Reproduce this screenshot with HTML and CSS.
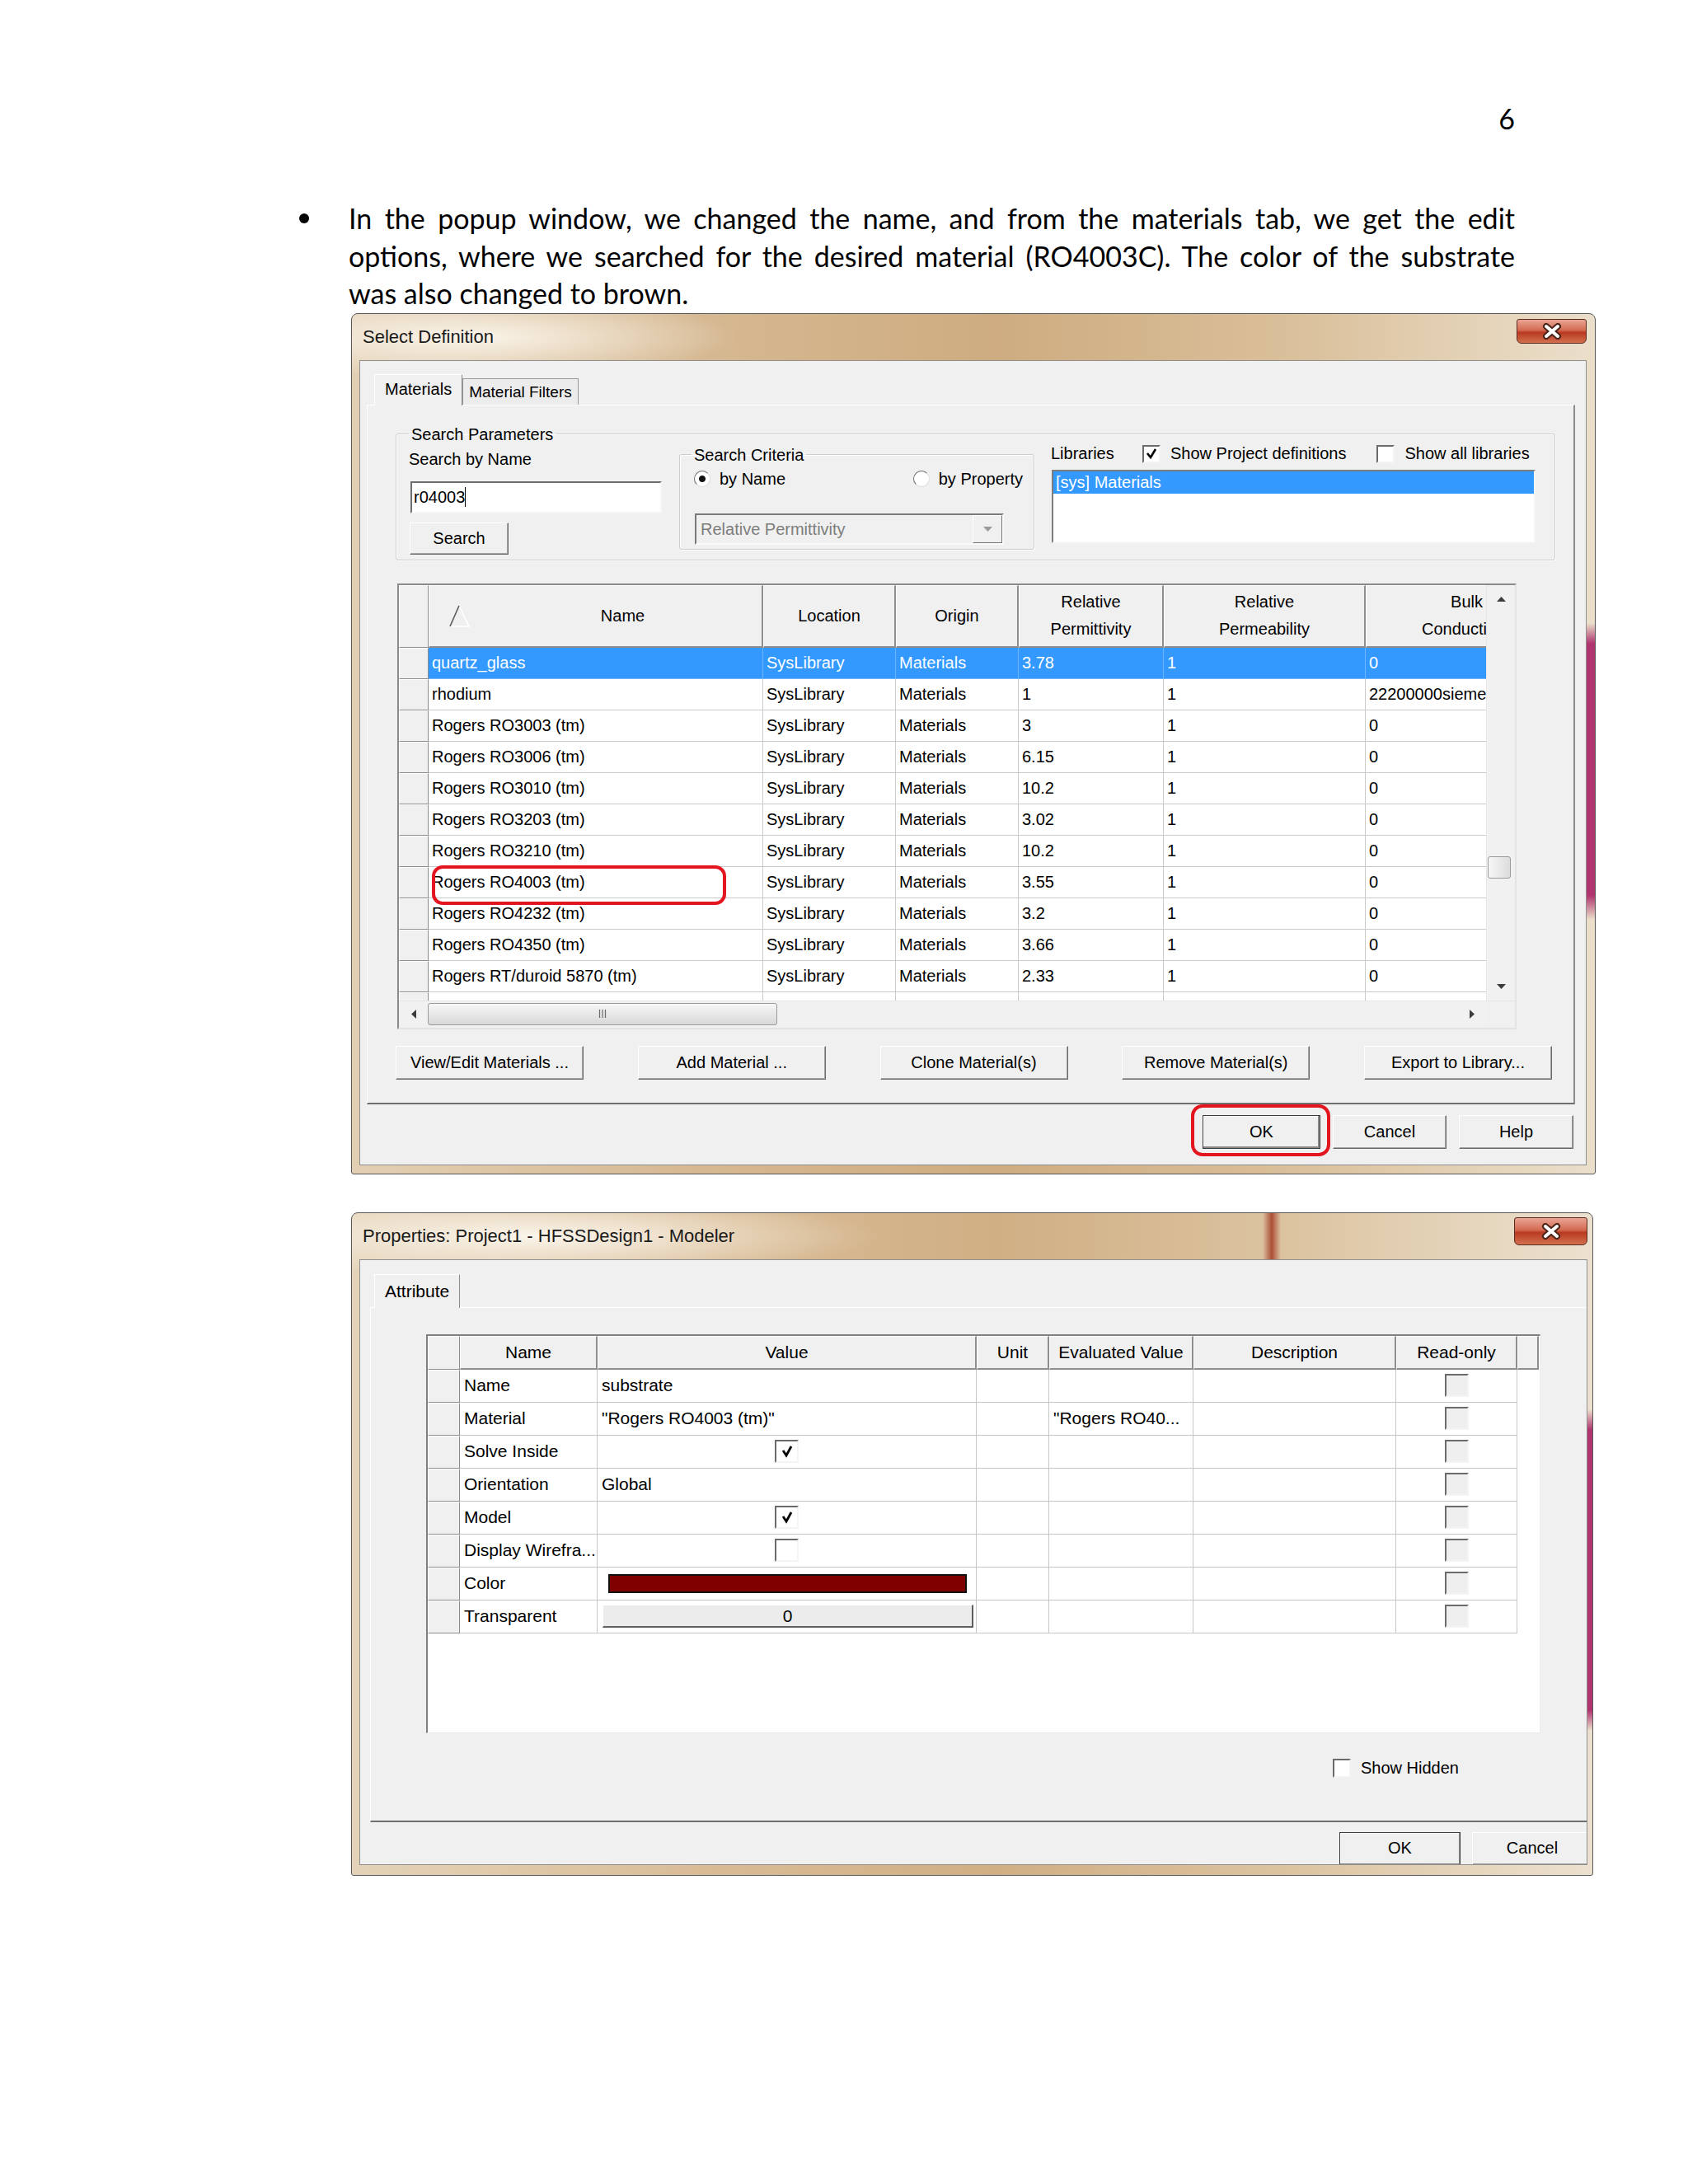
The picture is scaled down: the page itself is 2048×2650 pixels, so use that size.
FILE: index.html
```html
<!DOCTYPE html>
<html lang="en">
<head>
    <meta charset="UTF-8">
    <meta name="viewport" content="width=device-width, initial-scale=1.0">
    <title>Select Definition</title>
    <link rel="stylesheet" href="styles.css">
</head>
<body>
<div class="page">
    <div class="pagenum">6</div>
    <div class="para">
        <div class="bullet"><i></i></div>
        <div class="para-text">
            <span>In the popup window, we changed the name, and from the materials tab, we get the edit</span>
            <span>options, where we searched for the desired material (RO4003C). The color of the substrate</span>
            <span class="last">was also changed to brown.</span>
        </div>
    </div>

    <!-- select definition dialog -->
    <div class="win win-def">
        <div class="titlebar">
            <span class="title">Select Definition</span>
            <a href="javascript:;" class="closebtn">
                <svg width="28" height="20" viewBox="0 0 28 20"><path d="M7 4 L21 16 M21 4 L7 16" stroke="#4a2418" stroke-width="8" stroke-linecap="round"/><path d="M7 4 L21 16 M21 4 L7 16" stroke="#fff" stroke-width="4" stroke-linecap="round"/></svg>
            </a>
        </div>
        <div class="client">
            <div class="tabs">
                <span class="tab active">Materials</span>
                <span class="tab">Material Filters</span>
            </div>
            <div class="tabbody">
                <fieldset class="group params">
                    <legend>Search Parameters</legend>
                    <div class="params-row">
                        <div class="byname">
                            <div class="lbl">Search by Name</div>
                            <div class="edit">r04003<span class="caret"></span></div>
                            <a href="javascript:;" class="btn btn-search">Search</a>
                        </div>
                        <fieldset class="group criteria">
                            <legend>Search Criteria</legend>
                            <div class="radios">
                                <label><span class="radio on"></span>by Name</label>
                                <label><span class="radio"></span>by Property</label>
                            </div>
                            <div class="combo">
                                <span class="combo-txt">Relative Permittivity</span>
                                <span class="combo-btn"><svg width="11" height="6" viewBox="0 0 11 6"><path d="M0 0 L11 0 L5.5 6Z" fill="#9a9a9a"/></svg></span>
                            </div>
                        </fieldset>
                        <div class="libs">
                            <div class="libs-head">
                                <span class="libs-lbl">Libraries</span>
                                <label><span class="chk"><svg width="18" height="18" viewBox="0 0 18 18"><path d="M4 8 L8 13 L14 3" stroke="#000" stroke-width="2.6" fill="none"/></svg></span>Show Project definitions</label>
                                <label class="all"><span class="chk"></span>Show all libraries</label>
                            </div>
                            <div class="listbox"><div class="list-sel">[sys] Materials</div></div>
                        </div>
                    </div>
                </fieldset>

                <div class="grid">
                    <div class="grid-main">
                        <div class="grid-view">
                            <div class="mrow head">
                                <span class="rh"></span>
                                <span class="h-name"><svg class="sort" width="30" height="30" viewBox="0 0 30 30"><path d="M14 3 L26 28 L3 28" stroke="#fff" stroke-width="1.6" fill="none"/><path d="M3 28 L14 3" stroke="#5a5a5a" stroke-width="1.6" fill="none"/></svg><b>Name</b></span>
                                <span><b>Location</b></span>
                                <span><b>Origin</b></span>
                                <span><b>Relative<br>Permittivity</b></span>
                                <span><b>Relative<br>Permeability</b></span>
                                <span><b>Bulk<br>Conductivity</b></span>
                            </div>
                            <div class="mrow sel"><span class="rh"></span><span>quartz_glass</span><span>SysLibrary</span><span>Materials</span><span>3.78</span><span>1</span><span>0</span></div>
                            <div class="mrow"><span class="rh"></span><span>rhodium</span><span>SysLibrary</span><span>Materials</span><span>1</span><span>1</span><span>22200000siemens/m</span></div>
                            <div class="mrow"><span class="rh"></span><span>Rogers RO3003 (tm)</span><span>SysLibrary</span><span>Materials</span><span>3</span><span>1</span><span>0</span></div>
                            <div class="mrow"><span class="rh"></span><span>Rogers RO3006 (tm)</span><span>SysLibrary</span><span>Materials</span><span>6.15</span><span>1</span><span>0</span></div>
                            <div class="mrow"><span class="rh"></span><span>Rogers RO3010 (tm)</span><span>SysLibrary</span><span>Materials</span><span>10.2</span><span>1</span><span>0</span></div>
                            <div class="mrow"><span class="rh"></span><span>Rogers RO3203 (tm)</span><span>SysLibrary</span><span>Materials</span><span>3.02</span><span>1</span><span>0</span></div>
                            <div class="mrow"><span class="rh"></span><span>Rogers RO3210 (tm)</span><span>SysLibrary</span><span>Materials</span><span>10.2</span><span>1</span><span>0</span></div>
                            <div class="mrow"><span class="rh"></span><span class="mark">Rogers RO4003 (tm)</span><span>SysLibrary</span><span>Materials</span><span>3.55</span><span>1</span><span>0</span></div>
                            <div class="mrow"><span class="rh"></span><span>Rogers RO4232 (tm)</span><span>SysLibrary</span><span>Materials</span><span>3.2</span><span>1</span><span>0</span></div>
                            <div class="mrow"><span class="rh"></span><span>Rogers RO4350 (tm)</span><span>SysLibrary</span><span>Materials</span><span>3.66</span><span>1</span><span>0</span></div>
                            <div class="mrow"><span class="rh"></span><span>Rogers RT/duroid 5870 (tm)</span><span>SysLibrary</span><span>Materials</span><span>2.33</span><span>1</span><span>0</span></div>
                            <div class="mrow"><span class="rh"></span><span></span><span></span><span></span><span></span><span></span><span></span></div>
                        </div>
                        <div class="vscroll">
                            <span class="sb-btn"><svg width="11" height="6" viewBox="0 0 11 6"><path d="M0 6 L5.5 0 L11 6Z" fill="#3c3c3c"/></svg></span>
                            <span class="sb-track"><i class="vthumb"></i></span>
                            <span class="sb-btn"><svg width="11" height="6" viewBox="0 0 11 6"><path d="M0 0 L11 0 L5.5 6Z" fill="#3c3c3c"/></svg></span>
                        </div>
                    </div>
                    <div class="hscroll">
                        <span class="sb-btn hb"><svg width="6" height="11" viewBox="0 0 6 11"><path d="M6 0 L6 11 L0 5.5Z" fill="#3c3c3c"/></svg></span>
                        <span class="hthumb"><svg width="10" height="10" viewBox="0 0 10 10"><path d="M1.5 0V10M5 0V10M8.5 0V10" stroke="#6a6a6a" stroke-width="1.2"/></svg></span>
                        <span class="sb-gap"></span>
                        <span class="sb-btn hb"><svg width="6" height="11" viewBox="0 0 6 11"><path d="M0 0 L0 11 L6 5.5Z" fill="#3c3c3c"/></svg></span>
                        <span class="sb-corner"></span>
                    </div>
                </div>

                <div class="actions">
                    <a href="javascript:;" class="btn">View/Edit Materials ...</a>
                    <a href="javascript:;" class="btn">Add Material ...</a>
                    <a href="javascript:;" class="btn">Clone Material(s)</a>
                    <a href="javascript:;" class="btn">Remove Material(s)</a>
                    <a href="javascript:;" class="btn">Export to Library...</a>
                </div>
            </div>
            <div class="dlg-btns">
                <a href="javascript:;" class="btn btn-ok marked">OK</a>
                <a href="javascript:;" class="btn btn-cancel">Cancel</a>
                <a href="javascript:;" class="btn btn-help">Help</a>
            </div>
        </div>
    </div>

    <!-- properties dialog -->
    <div class="win win-props">
        <div class="titlebar">
            <span class="title">Properties: Project1 - HFSSDesign1 - Modeler</span>
            <a href="javascript:;" class="closebtn">
                <svg width="28" height="20" viewBox="0 0 28 20"><path d="M7 4 L21 16 M21 4 L7 16" stroke="#4a2418" stroke-width="8" stroke-linecap="round"/><path d="M7 4 L21 16 M21 4 L7 16" stroke="#fff" stroke-width="4" stroke-linecap="round"/></svg>
            </a>
        </div>
        <div class="client">
            <div class="tabs">
                <span class="tab active">Attribute</span>
            </div>
            <div class="tabbody">
                <div class="ptable">
                    <div class="prow phead">
                        <span class="rh"></span><span>Name</span><span>Value</span><span>Unit</span><span>Evaluated Value</span><span>Description</span><span>Read-only</span><span></span>
                    </div>
                    <div class="prow"><span class="rh"></span><span>Name</span><span>substrate</span><span></span><span></span><span></span><span class="ctr"><span class="chk ro"></span></span><span class="fill"></span></div>
                    <div class="prow"><span class="rh"></span><span>Material</span><span>"Rogers RO4003 (tm)"</span><span></span><span>"Rogers RO40...</span><span></span><span class="ctr"><span class="chk ro"></span></span><span class="fill"></span></div>
                    <div class="prow"><span class="rh"></span><span>Solve Inside</span><span class="ctr"><span class="chk big"><svg width="20" height="20" viewBox="0 0 20 20"><path d="M5 9 L9 15 L15 4" stroke="#000" stroke-width="2.8" fill="none"/></svg></span></span><span></span><span></span><span></span><span class="ctr"><span class="chk ro"></span></span><span class="fill"></span></div>
                    <div class="prow"><span class="rh"></span><span>Orientation</span><span>Global</span><span></span><span></span><span></span><span class="ctr"><span class="chk ro"></span></span><span class="fill"></span></div>
                    <div class="prow"><span class="rh"></span><span>Model</span><span class="ctr"><span class="chk big"><svg width="20" height="20" viewBox="0 0 20 20"><path d="M5 9 L9 15 L15 4" stroke="#000" stroke-width="2.8" fill="none"/></svg></span></span><span></span><span></span><span></span><span class="ctr"><span class="chk ro"></span></span><span class="fill"></span></div>
                    <div class="prow"><span class="rh"></span><span>Display Wirefra...</span><span class="ctr"><span class="chk big"></span></span><span></span><span></span><span></span><span class="ctr"><span class="chk ro"></span></span><span class="fill"></span></div>
                    <div class="prow"><span class="rh"></span><span>Color</span><span class="colorcell"><i class="swatch"></i></span><span></span><span></span><span></span><span class="ctr"><span class="chk ro"></span></span><span class="fill"></span></div>
                    <div class="prow"><span class="rh"></span><span>Transparent</span><span class="slidecell"><i class="slider">0</i></span><span></span><span></span><span></span><span class="ctr"><span class="chk ro"></span></span><span class="fill"></span></div>
                </div>
                <div class="hidden-row">
                    <label><span class="chk"></span>Show Hidden</label>
                </div>
            </div>
            <div class="dlg-btns2">
                <a href="javascript:;" class="btn btn-ok2">OK</a>
                <a href="javascript:;" class="btn btn-cancel2">Cancel</a>
            </div>
        </div>
    </div>
</div>
</body>
</html>
```

FILE: styles.css
```css
*{
    margin: 0;
    padding: 0;
    box-sizing: border-box;
}
a{
    text-decoration: none;
    color: #000;
}
body{
    background: #fff;
    font-family: Lato, "Liberation Sans", sans-serif;
    color: #000;
}
.page{
    width: 2048px;
    height: 2650px;
    overflow: hidden;
}
.pagenum{
    padding: 121px 210px 0 0;
    text-align: right;
    font-size: 34px;
    line-height: 45px;
}
.para{
    display: flex;
    margin-top: 76px;
    font-size: 34px;
    line-height: 45.5px;
}
.bullet{
    width: 60px;
    margin-left: 363px;
}
.bullet i{
    display: block;
    width: 12px;
    height: 12px;
    margin-top: 17px;
    border-radius: 50%;
    background: #000;
}
.para-text{
    width: 1415px;
}
.para-text span{
    display: block;
    text-align: justify;
    text-align-last: justify;
}
.para-text .last{
    text-align-last: left;
}

/* window frame */
.win{
    margin-left: 426px;
    border: 1px solid #585858;
    border-radius: 8px 8px 3px 3px;
    font-family: "Liberation Sans", Arial, sans-serif;
    font-size: 20px;
}
.win-def{
    width: 1510px;
    height: 1045px;
    margin-top: 1px;
    padding: 0 10px 10px 9px;
    background:
        linear-gradient(rgba(176,52,118,0), #b0346f 25px, #b0346f 330px, rgba(176,52,118,0)) right 0 top 375px / 10px 360px no-repeat,
        radial-gradient(ellipse 330px 50px at 140px 28px, rgba(252,247,238,.95), rgba(252,247,238,0)) no-repeat,
        linear-gradient(90deg, #e2cfb3, #d5b790 30%, #ceac80 52%, #dac09b 76%, #ebdfcb);
}
.win-props{
    width: 1507px;
    height: 805px;
    margin-top: 46px;
    padding: 0 6px 11px 9px;
    background:
        linear-gradient(rgba(176,52,118,0), #b0346f 25px, #b0346f 365px, rgba(176,52,118,0)) right 0 top 238px / 6px 390px no-repeat,
        linear-gradient(90deg, rgba(160,50,30,0), rgba(160,50,30,.8), rgba(160,50,30,0)) 1105px 0 / 22px 56px no-repeat,
        radial-gradient(ellipse 420px 50px at 220px 28px, rgba(252,247,238,.95), rgba(252,247,238,0)) no-repeat,
        linear-gradient(90deg, #e4d3b8, #d8bb95 30%, #d0af84 52%, #dcc4a1 76%, #ece1cf);
}
.titlebar{
    height: 56px;
    display: flex;
    justify-content: space-between;
    align-items: flex-start;
}
.title{
    padding-left: 4px;
    line-height: 56px;
    font-size: 22px;
    color: #1a1a1a;
}
.closebtn{
    width: 85px;
    height: 30px;
    margin-top: 6px;
    border: 1px solid #5b2a20;
    border-radius: 3px 3px 6px 6px;
    background: linear-gradient(#e9a594, #d46a52 45%, #b93a20 55%, #d2704f);
    display: flex;
    align-items: center;
    justify-content: center;
}
.win-props .closebtn{
    width: 89px;
    height: 34px;
    margin-top: 5px;
}
.client{
    background: #f0f0f0;
    border: 1px solid #8f8f8f;
    overflow: hidden;
}
.win-def .client{
    height: 977px;
    padding: 16px 13px 0 8px;
}
.win-props .client{
    height: 735px;
    padding: 17px 0 0 12px;
}

/* tabs */
.tabs{
    display: flex;
    align-items: flex-end;
    height: 37px;
    padding-left: 9px;
}
.tab{
    height: 32px;
    padding: 0 7px;
    border: 1px solid #9a9a9a;
    border-bottom: none;
    line-height: 32px;
    font-size: 19px;
    background: #ececec;
}
.tab.active{
    position: relative;
    height: 38px;
    margin-bottom: -1px;
    padding: 0 12px;
    border-color: #fff #8a8a8a #fff #fff;
    line-height: 34px;
    font-size: 20px;
    background: #f0f0f0;
}
.win-props .tabs{
    height: 40px;
    padding-left: 5px;
}
.win-props .tab.active{
    height: 41px;
    padding: 0 12px;
    line-height: 40px;
    font-size: 21px;
}
.tabbody{
    border: 1px solid #fff;
    border-right: 2px solid #8c8c8c;
    border-bottom: 2px solid #6f6f6f;
}
.win-def .tabbody{
    height: 849px;
    padding: 23px 23px 0 34px;
}
.win-props .tabbody{
    height: 625px;
    border-right: none;
    padding-top: 32px;
}

/* group boxes */
.group{
    border: 1px solid #cdcdcd;
    border-radius: 3px;
    box-shadow: inset 1px 1px 0 #fff, 1px 1px 0 #fff;
}
.group legend{
    padding: 0 3px;
    line-height: 24px;
}
.params{
    height: 165px;
    padding: 0 22px 0 15px;
}
.params-row{
    display: flex;
    align-items: flex-start;
}
.byname{
    width: 307px;
}
.lbl{
    margin-top: 6px;
    line-height: 24px;
}
.edit{
    display: flex;
    align-items: center;
    width: 305px;
    height: 39px;
    margin: 15px 0 0 2px;
    padding-left: 2px;
    background: #fff;
    border: 2px solid;
    border-color: #6d6d6d #f6f6f6 #f6f6f6 #6d6d6d;
}
.caret{
    width: 1px;
    height: 24px;
    background: #000;
}
.btn{
    display: flex;
    align-items: center;
    justify-content: center;
    background: #f0f0f0;
    border: 1px solid;
    border-color: #fff #6a6a6a #6a6a6a #fff;
    box-shadow: inset -1px -1px 0 #a3a3a3;
    color: #000;
    white-space: nowrap;
}
.btn-search{
    width: 120px;
    height: 39px;
    margin: 11px 0 0 1px;
}
.criteria{
    width: 431px;
    height: 127px;
    margin: 1px 0 0 21px;
    padding: 5px 13px 0 14px;
}
.radios{
    display: flex;
    justify-content: space-between;
    margin-left: 3px;
    line-height: 24px;
}
.radios label,
.libs-head label,
.hidden-row label{
    display: flex;
    align-items: center;
}
.radio{
    width: 20px;
    height: 20px;
    margin-right: 11px;
    border-radius: 50%;
    border: 1px solid;
    border-color: #6e6e6e #dedede #dedede #6e6e6e;
    background: #fff;
}
.radio.on{
    background: radial-gradient(circle, #111 0 3.5px, #fff 4.5px);
}
.combo{
    display: flex;
    justify-content: space-between;
    width: 375px;
    height: 38px;
    margin: 30px 0 0 4px;
    border: 2px solid;
    border-color: #7a7a7a #fafafa #fafafa #7a7a7a;
    background: #f0f0f0;
}
.combo-txt{
    padding-left: 5px;
    line-height: 34px;
    color: #7d7d7d;
}
.combo-btn{
    display: flex;
    align-items: center;
    justify-content: center;
    width: 36px;
    border: 1px solid;
    border-color: #fff #777 #777 #fff;
}
.libs{
    width: 589px;
    margin-left: 20px;
}
.libs-head{
    display: flex;
    align-items: center;
    height: 24px;
}
.libs-lbl{
    width: 111px;
}
.libs-head .all{
    margin-left: 37px;
}
.chk{
    display: inline-flex;
    align-items: center;
    justify-content: center;
    width: 22px;
    height: 22px;
    margin-right: 12px;
    border: 2px solid;
    border-color: #6b6b6b #f4f4f4 #f4f4f4 #6b6b6b;
    background: #fff;
}
.listbox{
    width: 587px;
    height: 89px;
    margin: 7px 0 0 1px;
    border: 2px solid;
    border-color: #7d7d7d #f6f6f6 #f6f6f6 #7d7d7d;
    background: #fff;
}
.list-sel{
    height: 27px;
    padding-left: 3px;
    line-height: 27px;
    background: #3399ff;
    color: #fff;
}

/* materials grid */
.grid{
    width: 1358px;
    height: 541px;
    margin: 28px 0 0 2px;
    border: 2px solid;
    border-color: #8a8a8a #e3e3e3 #e3e3e3 #8a8a8a;
    background: #fff;
}
.grid-main{
    display: flex;
    height: 504px;
}
.grid-view{
    width: 1319px;
    overflow: hidden;
}
.mrow{
    display: grid;
    grid-template-columns: 36px 406px 161px 149px 176px 245px 246px;
    width: 1419px;
    height: 38px;
}
.mrow > span{
    padding-left: 4px;
    border-right: 1px solid #cacaca;
    border-bottom: 1px solid #cacaca;
    line-height: 37px;
    white-space: nowrap;
    overflow: hidden;
}
.mrow > .rh,
.head > span{
    padding: 0;
    background: #f0f0f0;
    border: 1px solid;
    border-color: #fff #8e8e8e #8e8e8e #fff;
}
.head{
    height: 76px;
}
.head > span{
    display: flex;
    align-items: center;
    justify-content: center;
    text-align: center;
    line-height: 33px;
    border-right-width: 2px;
    border-bottom-width: 2px;
}
.head b{
    font-weight: normal;
}
.head > .h-name{
    justify-content: flex-start;
}
.h-name .sort{
    margin-left: 22px;
}
.h-name b{
    flex: 1;
    padding-left: 14px;
}
.sel > span{
    background: #3399ff;
    color: #fff;
    border-color: #6fb4ff;
}
.sel > .rh{
    background: #f0f0f0;
    border-color: #fff #8e8e8e #8e8e8e #fff;
}
.mrow > .mark{
    position: relative;
    overflow: visible;
}
.mark::after{
    content: "";
    position: absolute;
    left: 4px;
    top: -2px;
    width: 349px;
    height: 40px;
    border: 4px solid #e3151e;
    border-radius: 13px;
}
.vscroll{
    display: flex;
    flex-direction: column;
    width: 35px;
    background: #f1f1f1;
    border-left: 1px solid #e6e6e6;
}
.sb-btn{
    display: flex;
    align-items: center;
    justify-content: center;
    height: 34px;
}
.sb-track{
    flex: 1;
}
.vthumb{
    display: block;
    width: 28px;
    height: 27px;
    margin: 295px 0 0 1px;
    border: 1px solid #9a9a9a;
    border-radius: 3px;
    background: linear-gradient(90deg, #f7f7f7, #dcdcdc);
}
.hscroll{
    display: flex;
    height: 33px;
    background: #f1f1f1;
    border-top: 1px solid #e6e6e6;
}
.sb-btn.hb{
    width: 35px;
    height: auto;
}
.hthumb{
    display: flex;
    align-items: center;
    justify-content: center;
    width: 424px;
    height: 27px;
    margin-top: 2px;
    border: 1px solid #9a9a9a;
    border-radius: 3px;
    background: linear-gradient(#f7f7f7, #d8d8d8);
}
.sb-gap{
    flex: 1;
}
.sb-corner{
    width: 35px;
    background: #f0f0f0;
}
.actions{
    display: flex;
    justify-content: space-between;
    height: 41px;
    margin: 20px 3px 0 0;
}
.actions .btn{
    width: 228px;
}
.dlg-btns{
    display: flex;
    justify-content: flex-end;
    gap: 15px;
    height: 41px;
    margin-top: 13px;
    padding-right: 2px;
}
.btn-ok{
    width: 143px;
    border: 1px solid #3c3c3c;
    box-shadow: inset -2px -2px 0 #8a8a8a, inset 1px 1px 0 #fff;
}
.btn-cancel{
    width: 138px;
}
.btn-help{
    width: 139px;
}
.marked{
    position: relative;
}
.marked::after{
    content: "";
    position: absolute;
    top: -14px;
    right: -13px;
    bottom: -10px;
    left: -15px;
    border: 4px solid #e3151e;
    border-radius: 14px;
}

/* properties grid */
.ptable{
    width: 1352px;
    height: 484px;
    margin-left: 67px;
    background: #fff;
    border: 1px solid #ececec;
    border-top: 2px solid #7f7f7f;
    border-left: 2px solid #7f7f7f;
}
.prow{
    display: grid;
    grid-template-columns: 39px 167px 460px 88px 175px 246px 147px 26px;
    height: 40px;
    font-size: 21px;
}
.prow > span{
    display: flex;
    align-items: center;
    padding-left: 5px;
    border-right: 1px solid #c6c6c6;
    border-bottom: 1px solid #c6c6c6;
    white-space: nowrap;
    overflow: hidden;
}
.prow > .rh,
.phead > span{
    padding: 0;
    background: #f0f0f0;
    border: 1px solid;
    border-color: #fff #8e8e8e #8e8e8e #fff;
}
.phead{
    height: 41px;
}
.phead > span{
    justify-content: center;
    border-right-width: 2px;
    border-bottom-width: 2px;
}
.prow > .fill{
    border: none;
}
.prow > .ctr{
    justify-content: center;
    padding: 0;
}
.chk.big{
    width: 29px;
    height: 28px;
    margin: 0;
}
.chk.ro{
    width: 29px;
    height: 28px;
    margin: 0;
    background: #efefef;
}
.prow > .colorcell{
    padding: 0 11px 0 13px;
}
.swatch{
    display: block;
    width: 100%;
    height: 23px;
    background: #800000;
    border: 2px solid #111;
}
.prow > .slidecell{
    padding: 0 3px 0 6px;
}
.slider{
    display: block;
    width: 100%;
    height: 28px;
    line-height: 25px;
    text-align: center;
    font-style: normal;
    background: #ececec;
    border: 1px solid;
    border-color: #fff #5f5f5f #5f5f5f #fff;
    border-width: 1px 2px 2px 1px;
}
.hidden-row{
    margin-top: 31px;
    padding-left: 1167px;
    height: 23px;
    line-height: 23px;
}
.hidden-row .chk{
    height: 23px;
}
.dlg-btns2{
    display: flex;
    gap: 14px;
    height: 40px;
    margin-top: 12px;
    padding-left: 1176px;
}
.btn-ok2{
    flex: none;
    width: 147px;
    border: 1px solid #3c3c3c;
    box-shadow: inset -1px -1px 0 #8a8a8a, inset 1px 1px 0 #fff;
}
.btn-cancel2{
    flex: none;
    width: 146px;
}
```
